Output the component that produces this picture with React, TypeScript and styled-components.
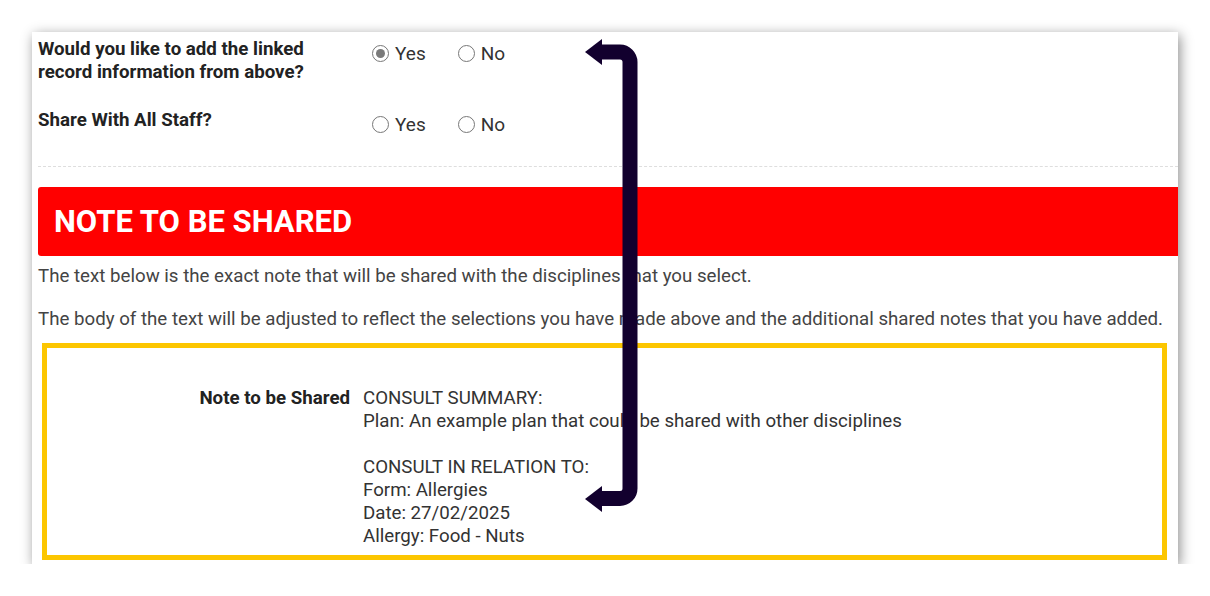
import styled, { createGlobalStyle } from 'styled-components';

const GlobalStyle = createGlobalStyle`
  body {
    margin: 0;
    background: #fff;
    font-family: Roboto, "Liberation Sans", Arial, sans-serif;
    color: #333;
  }
`;

const Page = styled.div`
  padding: 32px 0 0 32px;
`;

const Card = styled.div`
  position: relative;
  width: 1140px;
  padding: 6px 0 4px 6px;
  background: #fff;
  box-shadow: 2px 3px 12px rgba(0, 0, 0, 0.45);
`;

const QuestionRow = styled.div`
  display: grid;
  grid-template-columns: 334px auto;
  align-items: start;
  margin-bottom: 25px;
`;

const QuestionLabel = styled.div`
  font-size: 18.7px;
  font-weight: 700;
  line-height: 23px;
  color: #222;
`;

const RadioGroup = styled.div`
  display: flex;
  align-items: flex-start;
  gap: 32px;
  padding-top: 4px;
`;

const RadioOption = styled.label`
  display: flex;
  align-items: center;
  gap: 6px;
  font-size: 19px;
  line-height: 23px;
  color: #333;
`;

const RadioCircle = styled.span<{ $checked?: boolean }>`
  display: inline-flex;
  align-items: center;
  justify-content: center;
  width: 17px;
  height: 17px;
  box-sizing: border-box;
  border: 1.5px solid #777;
  border-radius: 50%;
  background: #fff;

  &::after {
    content: '';
    display: ${(p) => (p.$checked ? 'block' : 'none')};
    width: 9px;
    height: 9px;
    border-radius: 50%;
    background: #7a7a7a;
  }
`;

const Divider = styled.div`
  margin-top: 30px;
  border-top: 1px dashed #dedede;
`;

const Banner = styled.div`
  display: flex;
  align-items: center;
  height: 69px;
  margin-top: 20px;
  padding-left: 16px;
  background: #ff0000;
  border-radius: 3px 0 0 3px;
`;

const BannerTitle = styled.h2`
  margin: 0;
  font-size: 31px;
  font-weight: 700;
  color: #fff;
`;

const Intro = styled.p<{ $gap: number }>`
  margin: ${(p) => p.$gap}px 0 0;
  font-size: 18.7px;
  line-height: 23px;
  color: #444;
`;

const NoteBox = styled.div`
  display: grid;
  grid-template-columns: 303px 1fr;
  column-gap: 13px;
  margin: 12px 11px 0 4px;
  padding: 39px 0 7px;
  border: 5px solid #fcc600;
`;

const NoteLabel = styled.div`
  text-align: right;
  font-size: 18.7px;
  font-weight: 700;
  line-height: 23px;
  color: #222;
`;

const NoteValue = styled.div`
  white-space: pre-line;
  font-size: 18.7px;
  line-height: 23px;
  color: #333;
`;

const ArrowOverlay = styled.svg`
  position: absolute;
  left: 550px;
  top: 5px;
  pointer-events: none;
`;

const Radio = ({ label, checked }: { label: string; checked?: boolean }) => (
  <RadioOption>
    <RadioCircle $checked={checked} />
    {label}
  </RadioOption>
);

const noteText = `CONSULT SUMMARY:
Plan: An example plan that could be shared with other disciplines

CONSULT IN RELATION TO:
Form: Allergies
Date: 27/02/2025
Allergy: Food - Nuts`;

const App = () => (
  <Page>
    <GlobalStyle />
    <Card>
      <QuestionRow>
        <QuestionLabel>
          Would you like to add the linked
          <br />
          record information from above?
        </QuestionLabel>
        <RadioGroup>
          <Radio label="Yes" checked />
          <Radio label="No" />
        </RadioGroup>
      </QuestionRow>
      <QuestionRow>
        <QuestionLabel>Share With All Staff?</QuestionLabel>
        <RadioGroup>
          <Radio label="Yes" />
          <Radio label="No" />
        </RadioGroup>
      </QuestionRow>
      <Divider />
      <Banner>
        <BannerTitle>NOTE TO BE SHARED</BannerTitle>
      </Banner>
      <Intro $gap={9}>
        The text below is the exact note that will be shared with the disciplines that you select.
      </Intro>
      <Intro $gap={20}>
        The body of the text will be adjusted to reflect the selections you have made above and the
        additional shared notes that you have added.
      </Intro>
      <NoteBox>
        <NoteLabel>Note to be Shared</NoteLabel>
        <NoteValue>{noteText}</NoteValue>
      </NoteBox>

      {/* annotation arrow drawn over the form */}
      <ArrowOverlay width="60" height="485" viewBox="0 0 60 485">
        <path
          d="M 18 15 H 38 A 10 10 0 0 1 48 25 V 451.5 A 10 10 0 0 1 38 461.5 H 18"
          fill="none"
          stroke="#12002e"
          strokeWidth="15"
        />
        <polygon points="3,15 20,2 20,28" fill="#12002e" />
        <polygon points="3,462 20,449 20,475" fill="#12002e" />
      </ArrowOverlay>
    </Card>
  </Page>
);

export default App;
